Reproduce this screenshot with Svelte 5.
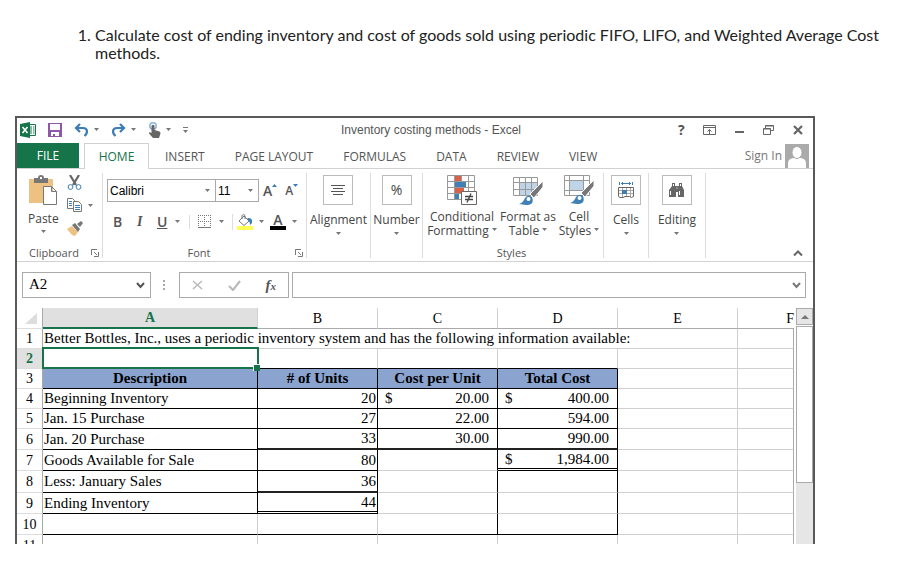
<script>
    let fontName = "Calibri";
    let fontSize = "11";
    let cellRef = "A2";
    let formula = "";
    let activeTab = "HOME";

    const tabs = [
        "HOME",
        "INSERT",
        "PAGE LAYOUT",
        "FORMULAS",
        "DATA",
        "REVIEW",
        "VIEW",
    ];

    const columns = ["A", "B", "C", "D", "E", "F"];

    // edge: b = black bottom, t = thick bottom, d = double bottom, r = black right
    const rows = [
        {
            n: 2,
            height: 20,
            cells: [{ edge: "b", selected: true }, { edge: "b" }, { edge: "b" }, { edge: "b" }],
        },
        {
            n: 3,
            height: 20,
            head: true,
            cells: [
                { text: "Description", edge: "b r" },
                { text: "# of Units", edge: "b r" },
                { text: "Cost per Unit", edge: "b r" },
                { text: "Total Cost", edge: "b r" },
            ],
        },
        {
            n: 4,
            height: 20,
            cells: [
                { text: "Beginning Inventory", edge: "b r" },
                { num: "20", edge: "b r" },
                { money: "20.00", sign: "$", edge: "b r" },
                { money: "400.00", sign: "$", edge: "b r" },
            ],
        },
        {
            n: 5,
            height: 20,
            cells: [
                { text: "Jan. 15 Purchase", edge: "b r" },
                { num: "27", edge: "b r" },
                { money: "22.00", edge: "b r" },
                { money: "594.00", edge: "b r" },
            ],
        },
        {
            n: 6,
            height: 21,
            cells: [
                { text: "Jan. 20 Purchase", edge: "b r" },
                { num: "33", edge: "t r" },
                { money: "30.00", edge: "t r" },
                { money: "990.00", edge: "t r" },
            ],
        },
        {
            n: 7,
            height: 21,
            cells: [
                { text: "Goods Available for Sale", edge: "b r" },
                { num: "80", edge: "b r" },
                { edge: "r" },
                { money: "1,984.00", sign: "$", edge: "d r" },
            ],
        },
        {
            n: 8,
            height: 22,
            cells: [
                { text: "Less: January Sales", edge: "b r" },
                { num: "36", edge: "t r" },
                { edge: "r" },
                { edge: "r" },
            ],
        },
        {
            n: 9,
            height: 21,
            cells: [
                { text: "Ending Inventory", edge: "b r" },
                { num: "44", edge: "d r" },
                { edge: "r" },
                { edge: "r" },
            ],
        },
        {
            n: 10,
            height: 21,
            cells: [{ edge: "b" }, { edge: "b" }, { edge: "b r" }, { edge: "b r" }],
        },
    ];
</script>

{#snippet caret()}
    <svg class="caret" width="5" height="3" viewBox="0 0 5 3"><path d="M0 0h5L2.500 3z" fill="#777" /></svg>
{/snippet}

{#snippet launcher()}
    <svg width="8" height="8" viewBox="0 0 8 8" fill="none" stroke="#777">
        <path d="M.5 6V.5H6M3 3l3 3M7.500 3v4.500H3" />
    </svg>
{/snippet}

<main>
    <ol>
        <li>
            Calculate cost of ending inventory and cost of goods sold using periodic FIFO, LIFO, and
            Weighted Average Cost methods.
        </li>
    </ol>

    <section class="window">
        <header class="titlebar">
            <div class="quick">
                <svg width="16" height="16" viewBox="0 0 16 16">
                    <path d="M9 2.500h6.500v11H9" fill="#fff" stroke="#15744a" />
                    <path d="M10 5h2M13 5h1.500M10 7h2M13 7h1.500M10 9h2M13 9h1.500M10 11h2M13 11h1.500" stroke="#15744a" />
                    <path d="M0 2l10-2v16L0 14z" fill="#15744a" />
                    <path d="M2.500 5l5 6M7.500 5l-5 6" stroke="#fff" stroke-width="1.600" />
                </svg>
                <button aria-label="Save">
                    <svg width="14" height="14" viewBox="0 0 14 14">
                        <path d="M0 0h14v14H0z" fill="#8e58a8" />
                        <path d="M2 1h10v6H2zM3 9h8v4H7v-2H5v2H3z" fill="#fff" />
                    </svg>
                </button>
                <button aria-label="Undo">
                    <svg width="15" height="14" viewBox="0 0 15 14" fill="none" stroke="#3d7db5" stroke-width="2.200">
                        <path d="M6 1L2 5l4 4M2 5h7c5 0 5 5 1.500 8" />
                    </svg>
                    {@render caret()}
                </button>
                <button aria-label="Redo">
                    <svg width="15" height="14" viewBox="0 0 15 14" fill="none" stroke="#3d7db5" stroke-width="2.200">
                        <path d="M9 1l4 4-4 4M13 5H6C1 5 1 10 4.500 13" />
                    </svg>
                    {@render caret()}
                </button>
                <button aria-label="Touch mode">
                    <svg width="13" height="16" viewBox="0 0 13 16">
                        <circle cx="5" cy="4" r="3.200" fill="none" stroke="#8fb4d4" stroke-width="1.500" />
                        <path d="M3.500 3.500q1.500-1.500 3 0V8l5 1.500q1 .5 1 2L11 16H5L1 11.500q0-2 2.500-.5z" fill="#666" />
                    </svg>
                    {@render caret()}
                </button>
                <button aria-label="Customize toolbar">
                    <svg width="5" height="6" viewBox="0 0 5 6" fill="#777"><path d="M0 0h5v1H0zM0 3h5L2.500 6z" /></svg>
                </button>
            </div>
            <h1>Inventory costing methods - Excel</h1>
            <div class="controls">
                <button class="help" aria-label="Help">?</button>
                <button aria-label="Ribbon display options">
                    <svg width="13" height="10" viewBox="0 0 13 10" fill="none" stroke="#666">
                        <path d="M.5.5h12v9H.5zM1 2.500h11M6.500 9V4.500M4.500 6.500l2-2 2 2" />
                    </svg>
                </button>
                <button aria-label="Minimize">
                    <svg width="10" height="10" viewBox="0 0 10 10"><path d="M0 6h9v2H0z" fill="#666" /></svg>
                </button>
                <button aria-label="Restore">
                    <svg width="11" height="10" viewBox="0 0 11 10" fill="none" stroke="#666">
                        <path d="M2.500 3V.5h8v5H8M2 1h9M.5 3.500h7v6h-7zM1 4h7" />
                    </svg>
                </button>
                <button aria-label="Close">
                    <svg width="10" height="10" viewBox="0 0 10 10"><path d="M1 1l8 8M9 1L1 9" stroke="#666" stroke-width="2.200" /></svg>
                </button>
            </div>
        </header>

        <nav>
            <button class="file">FILE</button>
            {#each tabs as tab (tab)}
                <button class="tab" class:active={tab === activeTab} on:click={() => (activeTab = tab)}>
                    {tab}
                </button>
            {/each}
            <a class="signin" href="#signin">
                Sign In
                <svg width="24" height="24" viewBox="0 0 24 24">
                    <path d="M0 0h24v24H0z" fill="#aaa" />
                    <path d="M3 24v-5q0-4 5-5h8q5 1 5 5v5z" fill="#fff" />
                    <ellipse cx="12" cy="8.500" rx="5" ry="6" fill="#fff" stroke="#aaa" />
                </svg>
            </a>
        </nav>

        <div class="ribbon">
            <div class="group clipboard">
                <div class="tools">
                    <button class="big">
                        <svg width="28" height="31" viewBox="0 0 28 31">
                            <path d="M0 4h24v24H0z" fill="#edc182" />
                            <path d="M5 3h4q0-3 3-3t3 3h4v5H5z" fill="#777" />
                            <path d="M11 2h2v2h-2z" fill="#fff" />
                            <path d="M14.500 11.500h8l5 5v13h-13zM22.500 11.500v5h5" fill="#fff" stroke="#777" />
                        </svg>
                        <span>Paste</span>
                        {@render caret()}
                    </button>
                    <div class="small">
                        <button aria-label="Cut">
                            <svg width="15" height="15" viewBox="0 0 15 15" fill="none">
                                <path d="M3 0l6 10M12 0L6 10" stroke="#666" stroke-width="2.200" />
                                <circle cx="3.500" cy="12" r="2.400" stroke="#3d7db5" />
                                <circle cx="11.500" cy="12" r="2.400" stroke="#3d7db5" />
                            </svg>
                        </button>
                        <button aria-label="Copy">
                            <svg width="15" height="15" viewBox="0 0 15 15" fill="#fff" stroke="#777">
                                <path d="M.5.5h5l2 2v8h-7z" />
                                <path d="M2 3.500h3M2 5.500h3M2 7.500h3" stroke="#3d7db5" />
                                <path d="M6.500 3.500h5l3 3v7h-8z" />
                                <path d="M8 7.500h5M8 9.500h5M8 11.500h5" stroke="#3d7db5" />
                            </svg>
                            {@render caret()}
                        </button>
                        <button aria-label="Format painter">
                            <svg width="16" height="15" viewBox="0 0 16 15">
                                <path d="M0 8l5-3 6 6-3 4-3-1z" fill="#edc182" />
                                <path d="M5 4l3-2 5 6-2 3zM10 3l4-3 2 2-3 4z" fill="#777" />
                            </svg>
                        </button>
                    </div>
                </div>
                <footer><span>Clipboard</span>{@render launcher()}</footer>
            </div>

            <div class="group font">
                <div class="tools fonttools">
                    <div class="line">
                        <label class="combo wide">
                            <select bind:value={fontName} aria-label="Font"><option>Calibri</option><option>Arial</option></select>
                            {@render caret()}
                        </label>
                        <label class="combo">
                            <select bind:value={fontSize} aria-label="Font size"><option>11</option><option>12</option></select>
                            {@render caret()}
                        </label>
                        <button class="grow" aria-label="Increase font size">
                            <b>A</b><svg width="5" height="3" viewBox="0 0 5 3"><path d="M0 3h5L2.500 0z" fill="#3d7db5" /></svg>
                        </button>
                        <button class="shrink" aria-label="Decrease font size">
                            <b>A</b><svg width="5" height="3" viewBox="0 0 5 3"><path d="M0 0h5L2.500 3z" fill="#3d7db5" /></svg>
                        </button>
                    </div>
                    <div class="line styles">
                        <button class="letter"><b>B</b></button>
                        <button class="letter italic"><i>I</i></button>
                        <button class="letter under"><u>U</u>{@render caret()}</button>
                        <button class="split" aria-label="Borders">
                            <svg width="13" height="14" viewBox="0 0 13 14" fill="none" stroke="#777">
                                <path d="M0 .5h13M0 6.500h13M.5 0v13M6.500 0v13M12.500 0v13" stroke-dasharray="1 1" />
                                <path d="M0 12.500h13" />
                            </svg>
                            {@render caret()}
                        </button>
                        <button class="split" aria-label="Fill color">
                            <svg width="16" height="16" viewBox="0 0 16 16">
                                <path d="M2 7l5-5 5 5-5 4.500zM5 5V1.500q2-2 3 0V5" fill="#fff" stroke="#777" />
                                <path d="M11 4q5 0 4 5l-2 2q0-4-3-6z" fill="#3d7db5" />
                                <path d="M0 12h16v4H0z" fill="#ffff54" />
                            </svg>
                            {@render caret()}
                        </button>
                        <button class="colour" aria-label="Font color">
                            <span><b>A</b></span>
                            {@render caret()}
                        </button>
                    </div>
                </div>
                <footer><span>Font</span>{@render launcher()}</footer>
            </div>

            <div class="group alignment">
                <button class="big">
                    <span class="box">
                        <svg width="14" height="12" viewBox="0 0 14 12" stroke="#555">
                            <path d="M0 1.500h14M2 4.500h10M0 7.500h14M2 10.500h10" />
                        </svg>
                    </span>
                    <span>Alignment</span>
                    {@render caret()}
                </button>
            </div>
            <div class="group number">
                <button class="big">
                    <span class="box">%</span>
                    <span>Number</span>
                    {@render caret()}
                </button>
            </div>

            <div class="group cellstyles">
                <div class="tools">
                    <button class="pic conditional">
                        <svg width="30" height="31" viewBox="0 0 30 31">
                            <path d="M8 0h6v6H8zM8 13h9v6H8z" fill="#dc5f47" />
                            <path d="M8 7h11v6H8zM8 19h4v6H8z" fill="#4080b5" />
                            <path d="M.5.5h27v24H.5zM0 6.500h28M0 12.500h28M0 18.500h28M7.500 0v25M14.500 0v6M21.500 0v25" fill="none" stroke="#999" />
                            <path d="M14.500 16.500h15v13h-15z" fill="#fff" stroke="#666" />
                            <path d="M18 21.500h8M18 24.500h8M24 18.500l-4 9" fill="none" stroke="#444" stroke-width="1.300" />
                        </svg>
                        <span>Conditional Formatting&nbsp;{@render caret()}</span>
                    </button>
                    <button class="pic formattable">
                        <svg width="30" height="31" viewBox="0 0 30 31">
                            <path d="M7 8h17v13H7z" fill="#c0d4e8" />
                            <path d="M.5 2.500h24v18H.5zM0 7.500h25M0 14.500h25M6.500 2v18M12.500 2v18M18.500 2v18" fill="none" stroke="#999" />
                            <path d="M30 6v6l-9 11-4-4z" fill="#777" stroke="#fff" />
                            <path d="M6 29q4-1 6-6 3-4 7-1 3 8-6 8z" fill="#4080b5" />
                            <circle cx="15.500" cy="24" r="2" fill="#fff" />
                        </svg>
                        <span>Format as Table&nbsp;{@render caret()}</span>
                    </button>
                    <button class="pic cellstyle">
                        <svg width="30" height="31" viewBox="0 0 30 31">
                            <path d="M6 6h14v10H6z" fill="#c0d4e8" />
                            <path d="M.5.5h25v20H.5zM0 5.500h26M0 15.500h26M5.500 0v20M19.500 0v20" fill="none" stroke="#999" />
                            <path d="M30 5v6l-9 11-4-4z" fill="#777" stroke="#fff" />
                            <path d="M6 28q4-1 6-6 3-4 7-1 3 8-6 8z" fill="#4080b5" />
                            <circle cx="15.500" cy="23" r="2" fill="#fff" />
                        </svg>
                        <span>Cell Styles&nbsp;{@render caret()}</span>
                    </button>
                </div>
                <footer><span>Styles</span></footer>
            </div>

            <div class="group cells">
                <button class="big">
                    <span class="box">
                        <svg width="16" height="16" viewBox="0 0 16 16" fill="none" stroke="#666">
                            <path d="M1.500 0v3M14.500 0v3M3 1.500h10M5 0L3.500 1.500 5 3M11 0l1.500 1.500L11 3" stroke="#3d7db5" />
                            <path d="M0 8.500h16M0 11.500h16M4.500 5v10M8.500 5v10M12.500 5v10" stroke="#aaa" />
                            <path d="M.5 5.500h15v9l-2 1-2-1H7l-2 1H2l-1.500-1z" />
                            <path d="M4 8h5v4H4z" fill="#3d7db5" stroke="none" />
                        </svg>
                    </span>
                    <span>Cells</span>
                    {@render caret()}
                </button>
            </div>
            <div class="group editing">
                <button class="big">
                    <span class="box">
                        <svg width="16" height="14" viewBox="0 0 16 14">
                            <path d="M3 0h3v3h4V0h3v3l2 4v7H9V9H7v5H0V7l3-4z" fill="#666" />
                            <path d="M1.500 8v4M10.500 8v4M4.500 1v2M11.500 1v2M7.500 5h1" stroke="#fff" />
                        </svg>
                    </span>
                    <span>Editing</span>
                    {@render caret()}
                </button>
            </div>
            <button class="collapse" aria-label="Collapse ribbon">
                <svg width="10" height="7" viewBox="0 0 10 7"><path d="M1 5.500l4-4 4 4" fill="none" stroke="#666" stroke-width="2" /></svg>
            </button>
        </div>

        <div class="formulabar">
            <label class="field name">
                <input bind:value={cellRef} aria-label="Name box" />
                <svg width="9" height="7" viewBox="0 0 9 7"><path d="M1 1l3.500 4L8 1" fill="none" stroke="#555" stroke-width="2" /></svg>
            </label>
            <svg class="dots" width="2" height="10" viewBox="0 0 2 10" fill="#aaa"><path d="M0 0h2v2H0zM0 4h2v2H0zM0 8h2v2H0z" /></svg>
            <div class="field actions">
                <button aria-label="Cancel">
                    <svg width="11" height="10" viewBox="0 0 11 10"><path d="M1 1l9 8M10 1L1 9" stroke="#bbb" stroke-width="1.600" /></svg>
                </button>
                <button aria-label="Enter">
                    <svg width="13" height="11" viewBox="0 0 13 11"><path d="M1 6l4 4 7-9" fill="none" stroke="#bbb" stroke-width="2.200" /></svg>
                </button>
                <button class="fx" aria-label="Insert function"><i>f<small>x</small></i></button>
            </div>
            <label class="field formula">
                <input bind:value={formula} aria-label="Formula" />
                <svg width="9" height="7" viewBox="0 0 9 7"><path d="M1 1l3.500 4L8 1" fill="none" stroke="#777" stroke-width="2" /></svg>
            </label>
        </div>

        <div class="sheet">
            <table>
                <colgroup>
                    <col class="c-row" /><col class="c-a" /><col class="c-n" /><col class="c-n" /><col class="c-n" /><col class="c-n" /><col />
                </colgroup>
                <thead>
                    <tr>
                        <th class="corner"><svg width="12" height="11" viewBox="0 0 12 11"><path d="M12 0v11H0z" fill="#ddd" /></svg></th>
                        {#each columns as column (column)}
                            <th class:current={column === "A"} class:last={column === "F"}>{column}</th>
                        {/each}
                    </tr>
                </thead>
                <tbody>
                    <tr style="height: 20px">
                        <th>1</th>
                        <td colspan="5">Better Bottles, Inc., uses a periodic inventory system and has the following information available:</td>
                        <td class="edge"></td>
                    </tr>
                    {#each rows as row (row.n)}
                        <tr style="height: {row.height}px" class:head={row.head}>
                            <th class:current={row.n === 2}>{row.n}</th>
                            {#each row.cells as cell}
                                <td
                                    class={cell.edge}
                                    class:selected={cell.selected}
                                    class:num={cell.num}
                                    class:money={cell.money}
                                >
                                    {#if cell.money}
                                        <div><span>{cell.sign ?? ""}</span><span>{cell.money}</span></div>
                                    {:else}
                                        {cell.num ?? cell.text ?? ""}
                                    {/if}
                                </td>
                            {/each}
                            <td></td>
                            <td class="edge"></td>
                        </tr>
                    {/each}
                    <tr class="cut">
                        <th><div>11</div></th>
                        <td></td><td></td><td></td><td></td><td></td><td class="edge"></td>
                    </tr>
                </tbody>
            </table>
            <div class="scroll">
                <button aria-label="Scroll up">
                    <svg width="8" height="4" viewBox="0 0 8 4"><path d="M0 4h8L4 0z" fill="#777" /></svg>
                </button>
                <div class="track"><div class="thumb"></div></div>
            </div>
        </div>
    </section>
</main>

<style>
    :global(body) {
        background: #fff;
    }

    * {
        box-sizing: border-box;
    }

    main {
        padding: 26px 0 18px;
        font-family: "Open Sans", "Noto Sans", sans-serif;
        font-size: 12px;
        line-height: 14px;
        color: #555;
    }

    ol {
        margin: 0 12px 54px 0;
        padding-left: 95px;
        font-family: "Lato", sans-serif;
        font-size: 16px;
        line-height: 18px;
        color: #222;
    }

    button {
        display: flex;
        align-items: center;
        padding: 0;
        border: none;
        background: none;
        font: inherit;
        color: inherit;
        cursor: pointer;
    }

    svg {
        display: block;
        flex: none;
    }

    .window {
        margin: 0 83px 0 15px;
        border: 2px solid #58595b;
        border-bottom: none;
    }

    .titlebar {
        display: flex;
        align-items: center;
        height: 25px;
        padding-bottom: 2px;
    }

    .quick {
        display: flex;
        align-items: center;
        gap: 12px;
        width: 175px;
        padding-left: 3px;
    }

    .quick button {
        gap: 5px;
    }

    h1 {
        flex: 1;
        margin: 0;
        font: 12px "Liberation Sans", Arial, sans-serif;
        text-align: center;
    }

    .controls {
        display: flex;
        align-items: center;
        justify-content: space-between;
        width: 143px;
        padding: 0 10px 0 8px;
    }

    .help {
        font-size: 14px;
        font-weight: bold;
    }

    nav {
        display: flex;
        height: 26px;
        border-bottom: 1px solid #d2d2d2;
    }

    nav button {
        justify-content: center;
    }

    .file {
        width: 62px;
        margin-right: 5px;
        background: #15744a;
        color: #fff;
    }

    .tab {
        margin-right: 30px;
        padding-top: 2px;
    }

    .tab.active {
        width: 65px;
        margin: 0 16px -1px 0;
        padding-top: 0;
        border: 1px solid #d2d2d2;
        border-bottom: none;
        background: #fff;
        color: #15744a;
    }

    .signin {
        display: flex;
        align-items: center;
        gap: 3px;
        margin-left: auto;
        padding-right: 4px;
        color: #777;
        text-decoration: none;
    }

    .ribbon {
        display: flex;
        height: 93px;
        border-bottom: 1px solid #d2d2d2;
    }

    .group {
        display: flex;
        flex-direction: column;
        align-items: center;
        justify-content: space-between;
        margin: 4px 0 3px;
        padding-top: 2px;
        border-right: 1px solid #ddd;
    }

    .clipboard {
        width: 86px;
    }

    .font {
        width: 204px;
    }

    .alignment {
        width: 64px;
    }

    .number {
        width: 52px;
    }

    .cellstyles {
        width: 181px;
    }

    .cells {
        width: 45px;
    }

    .editing {
        width: 57px;
    }

    .tools {
        display: flex;
        width: 100%;
    }

    .group footer {
        display: flex;
        align-items: center;
        width: 100%;
        padding-right: 3px;
        font-size: 11px;
        line-height: 10px;
    }

    .group footer span {
        flex: 1;
        text-align: center;
    }

    .big {
        flex-direction: column;
        color: #444;
    }

    .big span {
        margin: 8px 0 5px;
    }

    .big .box {
        display: flex;
        align-items: center;
        justify-content: center;
        width: 30px;
        height: 30px;
        margin: 0;
        border: 1px solid #bbb;
        font-size: 14px;
    }

    .clipboard .tools {
        gap: 8px;
        padding-left: 11px;
    }

    .clipboard .big span {
        margin: 6px 0 4px;
    }

    .small {
        display: flex;
        flex-direction: column;
        gap: 8px;
    }

    .small button {
        gap: 6px;
    }

    .fonttools {
        flex-direction: column;
        gap: 8px;
        padding: 4px 0 0 4px;
    }

    .line {
        display: flex;
        align-items: center;
        height: 23px;
    }

    .combo {
        display: flex;
        align-items: center;
        width: 43px;
        height: 23px;
        padding-right: 5px;
        border: 1px solid #aaa;
        border-left: none;
    }

    .combo.wide {
        width: 109px;
        border-left: 1px solid #aaa;
    }

    select {
        flex: 1;
        min-width: 0;
        padding: 0 2px;
        border: none;
        background: none;
        appearance: none;
        font: 12px "Liberation Sans", Arial, sans-serif;
        color: #000;
    }

    .grow,
    .shrink {
        align-items: flex-start;
        margin-left: 4px;
        font-size: 14px;
    }

    .shrink {
        margin-left: 8px;
        font-size: 12px;
    }

    .line b {
        font-weight: 600;
    }

    .styles {
        font-size: 14px;
    }

    .letter {
        width: 22px;
        padding-left: 6px;
    }

    .letter.italic {
        padding-left: 8px;
    }

    .letter i {
        font-family: "Liberation Serif", serif;
        font-weight: bold;
    }

    .letter.under {
        gap: 8px;
        width: 38px;
        font-weight: 600;
    }

    .split {
        gap: 8px;
        width: 43px;
        padding-left: 8px;
        border-left: 1px solid #ddd;
    }

    .split + .split {
        gap: 6px;
        width: 38px;
        padding-left: 4px;
    }

    .colour {
        gap: 6px;
    }

    .colour span {
        width: 16px;
        height: 16px;
        border-bottom: 4px solid #000;
        line-height: 12px;
        text-align: center;
    }

    .cellstyles .tools {
        justify-content: center;
        gap: 1px;
    }

    .pic {
        flex-direction: column;
        gap: 4px;
        color: #444;
    }

    .pic span :global(.caret) {
        display: inline-block;
        vertical-align: 4px;
    }

    .conditional {
        width: 74px;
    }

    .formattable {
        width: 56px;
    }

    .cellstyle {
        width: 44px;
    }

    .collapse {
        align-self: flex-end;
        margin: 0 10px 4px auto;
    }

    .formulabar {
        display: flex;
        align-items: center;
        padding: 10px 7px 10px 5px;
        font-family: "Liberation Serif", "Times New Roman", serif;
    }

    .field {
        display: flex;
        align-items: center;
        height: 26px;
        border: 1px solid #aaa;
    }

    .field input {
        flex: 1;
        min-width: 0;
        padding: 0 0 2px 6px;
        border: none;
        outline: none;
        background: none;
        font: inherit;
        font-size: 15px;
        color: #000;
    }

    .name {
        width: 129px;
        padding-right: 5px;
    }

    .dots {
        margin: 0 14px 0 12px;
    }

    .actions {
        justify-content: space-between;
        width: 110px;
        margin-right: 3px;
        padding: 0 12px;
    }

    .fx {
        font-size: 15px;
        font-weight: bold;
    }

    .fx small {
        font-size: 11px;
    }

    .formula {
        flex: 1;
        padding-right: 4px;
    }

    .sheet {
        display: flex;
        gap: 2px;
        font-family: "Liberation Serif", "Times New Roman", serif;
        font-size: 15px;
        line-height: 17px;
        color: #000;
    }

    table {
        flex: 1;
        min-width: 0;
        table-layout: fixed;
        border-collapse: separate;
        border-spacing: 0;
    }

    .c-row {
        width: 26px;
    }

    .c-a {
        width: 215px;
    }

    .c-n {
        width: 120px;
    }

    th,
    td {
        padding: 0 1px;
        border: 0 solid #d0d0d0;
        border-width: 0 1px 1px 0;
        white-space: nowrap;
    }

    th {
        font-size: 14px;
        font-weight: normal;
    }

    thead th {
        height: 21px;
        border-bottom-color: #aaa;
    }

    thead .last {
        padding-right: 0;
        border-right: none;
        text-align: right;
    }

    thead .corner {
        border-right-color: #aaa;
        border-bottom-color: #ddd;
    }

    .corner svg {
        margin-left: auto;
        margin-right: 4px;
    }

    th.current {
        background: #e0e0e0;
        color: #15744a;
        font-weight: bold;
    }

    thead .current {
        border-bottom: 2px solid #15744a;
    }

    tbody th {
        border-color: #ddd;
        border-right-color: #aaa;
    }

    .edge {
        border-right-color: #aaa;
    }

    .b {
        border-bottom-color: #000;
    }

    .t {
        border-bottom: 2px solid #222;
    }

    .d {
        border-bottom: 3px double #000;
    }

    .r {
        border-right-color: #000;
    }

    .head .b {
        background: #8aa3cf;
        font-weight: bold;
        text-align: center;
    }

    .num {
        text-align: right;
    }

    .money div {
        display: flex;
        justify-content: space-between;
        padding: 0 7px 0 6px;
    }

    /* selection frame lies over the neighbouring borders */
    .selected {
        position: relative;
    }

    .selected::before {
        content: "";
        position: absolute;
        inset: -2px -2px -1px -1px;
        border: 2px solid #15744a;
    }

    .selected::after {
        content: "";
        position: absolute;
        right: -3px;
        bottom: -3px;
        width: 6px;
        height: 6px;
        border: 1px solid #fff;
        border-width: 1px 0 0 1px;
        background: #15744a;
    }

    .cut {
        height: 9px;
    }

    .cut th,
    .cut td {
        border-bottom: none;
    }

    .cut div {
        height: 9px;
        padding-top: 2px;
        overflow: hidden;
    }

    .scroll {
        display: flex;
        flex-direction: column;
        width: 17px;
    }

    .scroll button {
        justify-content: center;
        height: 17px;
        border: 1px solid #aaa;
        background: #e6e6e6;
    }

    .track {
        flex: 1;
        margin-top: 1px;
        background: #e6e6e6;
    }

    .thumb {
        height: 72%;
        border: 1px solid #aaa;
        background: #fff;
    }
</style>
